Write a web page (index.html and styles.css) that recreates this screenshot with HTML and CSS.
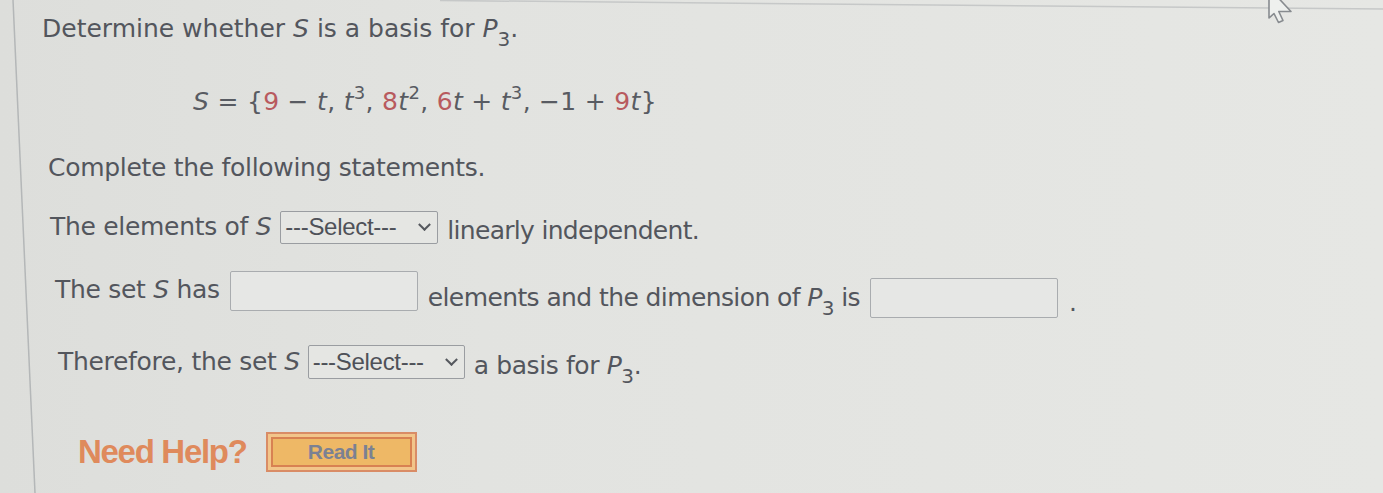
FILE: index.html
```html
<!DOCTYPE html>
<html>
<head>
<meta charset="utf-8">
<link rel="stylesheet" href="styles.css">
</head>
<body>
<svg class="edges" width="1383" height="493" viewBox="0 0 1383 493"><path d="M13 0 L35 493" stroke="#b4b7b8" stroke-width="1.5" fill="none"/><path d="M440 0.5 L1383 9" stroke="#c6c8c8" stroke-width="1.5" fill="none"/></svg>
<div class="panel">
  <p class="q row1">Determine whether <i>S</i> is a basis for <i>P</i><sub>3</sub>.</p>
  <p class="formula"><i>S</i> = {<span class="r">9</span> − <i>t</i>, <i>t</i><sup>3</sup>, <span class="r">8</span><i>t</i><sup>2</sup>, <span class="r">6</span><i>t</i> + <i>t</i><sup>3</sup>, −1 + <span class="r">9</span><i>t</i>}</p>
  <p class="q row2">Complete the following statements.</p>
  <div class="line row3">
    <span>The elements of <i>S</i></span>
    <span class="select s1">---Select--- <span class="chev"></span></span>
    <span class="lower tight">linearly independent.</span>
  </div>
  <div class="line row4">
    <span class="up">The set <i>S</i> has</span>
    <span class="input i1"></span>
    <span class="lower2 tight2">elements and the dimension of <i>P</i><sub>3</sub> is</span>
    <span class="input i2"></span>
    <span class="dot">.</span>
  </div>
  <div class="line row5">
    <span>Therefore, the set <i>S</i></span>
    <span class="select s2">---Select--- <span class="chev"></span></span>
    <span class="lower tight3">a basis for <i>P</i><sub>3</sub>.</span>
  </div>
  <div class="help row6">
    <span class="need">Need Help?</span>
    <span class="btn"><span class="btn-in">Read It</span></span>
  </div>
</div>
<svg class="cursor" width="36" height="30" viewBox="0 0 36 30"><path d="M8 -12 L8 18 L13 13.5 L17.5 22.5 L22 20.5 L17.8 11.5 L30 11.5 Z" fill="#eef0ee" stroke="#878b8f" stroke-width="1.6" stroke-linejoin="round"/></svg>
</body>
</html>
```
FILE: styles.css
```css
html, body {
  margin: 0;
  padding: 0;
}
body {
  width: 1383px;
  height: 493px;
  overflow: hidden;
  background: linear-gradient(90deg, #dddedb 0%, #e2e3e0 35%, #e6e7e4 100%);
  font-family: "DejaVu Sans", Verdana, sans-serif;
  color: #53565d;
  position: relative;
}
.edges {
  position: absolute;
  left: 0;
  top: 0;
}
.panel {
  position: relative;
  padding-top: 14px;
}
p { margin: 0; }
i { font-style: italic; }
sub { font-size: 0.8em; vertical-align: -0.45em; line-height: 0; }
sup { font-size: 0.72em; vertical-align: 0.62em; line-height: 0; }
.q, .line, .formula {
  font-size: 25px;
  line-height: 30px;
  letter-spacing: 0;
}
.row1 { padding-left: 42px; }
.formula { padding-left: 193px; margin-top: 43px; color: #585b62; letter-spacing: 0.3px; }
.r { color: #b85a5e; }
.row2 { padding-left: 48px; margin-top: 36px; letter-spacing: -0.3px; }
.line { display: flex; align-items: center; letter-spacing: -0.3px; }
.row3 { padding-left: 50px; margin-top: 26px; height: 36px; }
.row4 { padding-left: 55px; margin-top: 26px; height: 48px; }
.row5 { padding-left: 58px; margin-top: 25px; height: 36px; }
.tight { letter-spacing: -0.7px; }
.tight2 { letter-spacing: -0.6px; }
.tight3 { letter-spacing: -0.4px; }
.select {
  display: inline-flex;
  align-items: center;
  justify-content: space-between;
  box-sizing: border-box;
  height: 33px;
  margin: 0 9px 0 9px;
  padding: 0 8px 0 4px;
  border: 1.5px solid #9a9da1;
  border-radius: 2px;
  background: #e5e6e3;
  font-family: "Liberation Sans", Arial, sans-serif;
  font-size: 24px;
  letter-spacing: -0.3px;
  color: #4e5158;
}
.s1 { width: 158px; }
.s2 { width: 157px; margin-left: 8px; height: 34px; }
.chev {
  width: 7px;
  height: 7px;
  border-right: 2px solid #55585e;
  border-bottom: 2px solid #55585e;
  transform: rotate(45deg) translate(-2px, -2px);
}
.lower { position: relative; top: 4px; }
.up { position: relative; top: -5px; }
.lower2 { position: relative; top: 3px; }
.input {
  display: inline-block;
  box-sizing: border-box;
  height: 40px;
  border: 1.5px solid #a9acaf;
  border-radius: 2px;
  background: #e6e7e5;
}
.i1 { width: 188px; margin: 0 10px 0 10px; position: relative; top: -4px; }
.i2 { width: 188px; margin: 0 11px 0 10px; position: relative; top: 3px; }
.dot { position: relative; top: 8px; }
.help {
  display: flex;
  align-items: center;
  padding-left: 78px;
  margin-top: 52px;
}
.need {
  font-family: "Liberation Sans", Arial, sans-serif;
  font-weight: bold;
  font-size: 33px;
  letter-spacing: -1.3px;
  color: #df8a5c;
}
.btn {
  margin-left: 19px;
  width: 151px;
  height: 40px;
  box-sizing: border-box;
  border: 2px solid #d98c66;
  background: #f2c58a;
  padding: 3px;
  display: flex;
}
.btn-in {
  flex: 1;
  border: 2px solid #d88152;
  background: #eeb866;
  display: flex;
  align-items: center;
  justify-content: center;
  font-family: "Liberation Sans Narrow", "Liberation Sans", Arial, sans-serif;
  font-weight: bold;
  font-size: 21px;
  letter-spacing: -0.5px;
  color: #7b8193;
}
.cursor {
  position: absolute;
  left: 1261px;
  top: 0;
}
```
